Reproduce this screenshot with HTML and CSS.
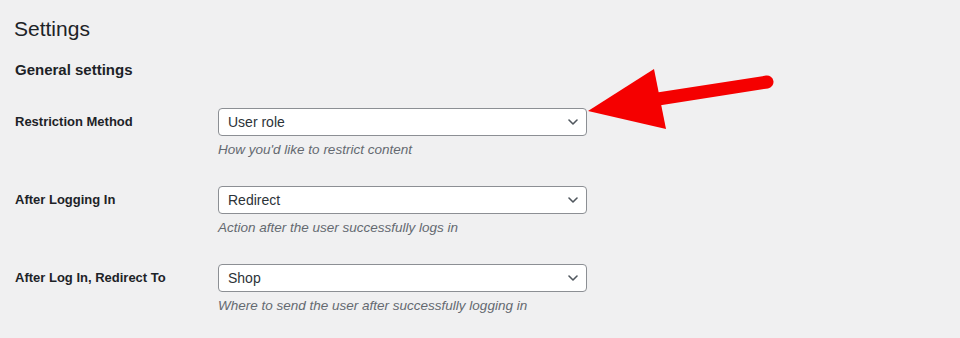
FILE: index.html
```html
<!DOCTYPE html>
<html>
<head>
<meta charset="utf-8">
<link rel="stylesheet" href="styles.css">
</head>
<body>
<div class="wrap">
  <h1 class="title">Settings</h1>
  <h2 class="subtitle">General settings</h2>
  <div class="row">
    <div class="label">Restriction Method</div>
    <div class="field">
      <div class="select"><span>User role</span><svg class="chev" width="10" height="6" viewBox="0 0 10 6"><polyline points="1,1 5,5 9,1" fill="none" stroke="#50575e" stroke-width="1.6" stroke-linecap="round" stroke-linejoin="round"/></svg></div>
      <p class="desc">How you'd like to restrict content</p>
    </div>
  </div>
  <div class="row">
    <div class="label">After Logging In</div>
    <div class="field">
      <div class="select"><span>Redirect</span><svg class="chev" width="10" height="6" viewBox="0 0 10 6"><polyline points="1,1 5,5 9,1" fill="none" stroke="#50575e" stroke-width="1.6" stroke-linecap="round" stroke-linejoin="round"/></svg></div>
      <p class="desc">Action after the user successfully logs in</p>
    </div>
  </div>
  <div class="row">
    <div class="label">After Log In, Redirect To</div>
    <div class="field">
      <div class="select"><span>Shop</span><svg class="chev" width="10" height="6" viewBox="0 0 10 6"><polyline points="1,1 5,5 9,1" fill="none" stroke="#50575e" stroke-width="1.6" stroke-linecap="round" stroke-linejoin="round"/></svg></div>
      <p class="desc">Where to send the user after successfully logging in</p>
    </div>
  </div>
</div>
<svg class="arrow" width="200" height="80" viewBox="0 0 200 80">
  <line x1="78" y1="39" x2="187" y2="22" stroke="#f50000" stroke-width="13" stroke-linecap="round"/>
  <polygon points="8,51 74,9 86,69" fill="#f50000"/>
</svg>
</body>
</html>
```
FILE: styles.css
```css
html, body {
  margin: 0;
  padding: 0;
  background: #f0f0f1;
  color: #1d2327;
  font-family: "Liberation Sans", Arial, sans-serif;
}
.wrap {
  padding: 15px 15px 0 15px;
}
.title {
  margin: 0;
  font-size: 21px;
  font-weight: 400;
  line-height: 27px;
  margin-left: -1px;
}
.subtitle {
  margin: 18px 0 0 0;
  font-size: 15px;
  font-weight: 700;
  line-height: 20px;
}
.row {
  display: grid;
  grid-template-columns: 203px 369px;
  margin-top: 27px;
}
.subtitle + .row {
  margin-top: 28px;
}
.label {
  font-size: 13px;
  font-weight: 700;
  line-height: 28px;
}
.select {
  height: 28px;
  box-sizing: border-box;
  border: 1px solid #8c8f94;
  border-radius: 4px;
  background: #fff;
  display: flex;
  align-items: center;
  justify-content: space-between;
  padding: 0 8px 0 9px;
  font-size: 14px;
  color: #2c3338;
}
.desc {
  margin: 5px 0 0 0;
  font-size: 13.5px;
  line-height: 18px;
  font-style: italic;
  color: #646970;
}
.arrow {
  position: absolute;
  left: 580px;
  top: 60px;
}
```
